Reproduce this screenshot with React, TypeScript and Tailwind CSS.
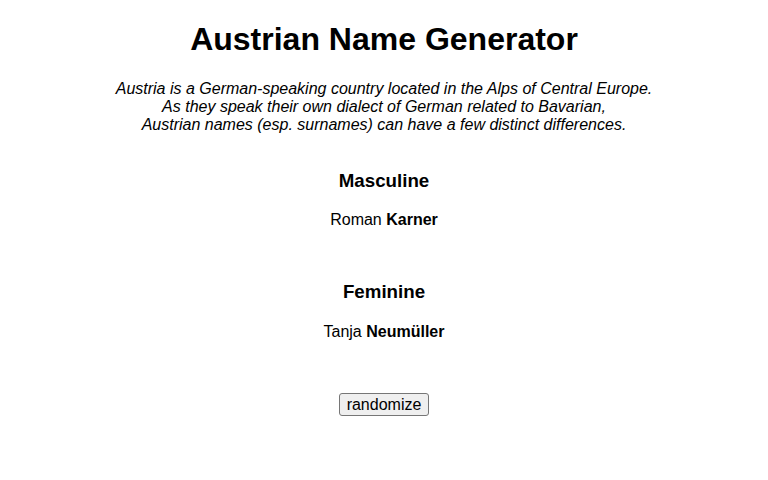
import { useState } from 'react';

const masculine = [
    ['Roman', 'Karner'],
    ['Lukas', 'Gruber'],
    ['Florian', 'Huber'],
];

const feminine = [
    ['Tanja', 'Neumüller'],
    ['Anna', 'Wallner'],
    ['Katharina', 'Pichler'],
];

export default function App() {
    const [idx, setIdx] = useState(0);
    const m = masculine[idx % masculine.length];
    const f = feminine[idx % feminine.length];

    return (
        <div className="text-center text-black bg-white font-['Liberation_Sans',Arial,sans-serif] text-[16px] leading-[normal]">
            <h1 className="text-[32px] font-bold pt-[21.44px] mb-[21.44px]">Austrian Name Generator</h1>
            <p className="italic">
                Austria is a German-speaking country located in the Alps of Central Europe.
                <br />
                As they speak their own dialect of German related to Bavarian,
                <br />
                Austrian names (esp. surnames) can have a few distinct differences.
            </p>

            <h3 className="text-[18.72px] font-bold mt-[35.8px] mb-[19.4px]">Masculine</h3>
            <p>
                {m[0]} <b>{m[1]}</b>
            </p>

            <h3 className="text-[18.72px] font-bold mt-[52px] mb-[20px]">Feminine</h3>
            <p>
                {f[0]} <b>{f[1]}</b>
            </p>

            <div className="mt-[52px]">
                <button
                    onClick={() => setIdx(idx + 1)}
                    className="text-[16px] leading-[normal] px-[7px] py-[1.5px] border border-[#767676] rounded-[3px] bg-[#efefef] hover:bg-[#e5e5e5]"
                >
                    randomize
                </button>
            </div>
        </div>
    );
}
